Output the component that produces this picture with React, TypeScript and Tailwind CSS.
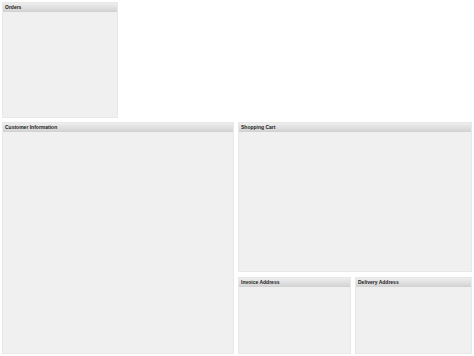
const Panel = ({ title, className }: { title: string; className: string }) => (
  <div className={`flex flex-col bg-[#f0f0f0] border border-[#e8e8e8] ${className}`}>
    <div className="h-[9px] shrink-0 flex items-center px-[2px] bg-gradient-to-b from-[#eeeeee] to-[#d5d5d5] border-b border-[#d2d2d2]">
      <span className="text-[5px] leading-none font-bold text-[#222]">{title}</span>
    </div>
    <div className="flex-1" />
  </div>
);

export default function App() {
  return (
    <div className="w-[474px] h-[356px] bg-white p-[2px] flex flex-col gap-[4px] font-['Liberation_Sans',Arial,sans-serif]">
      <div className="flex">
        <Panel title="Orders" className="w-[116px] h-[116px]" />
      </div>
      <div className="flex-1 flex gap-[4px]">
        <Panel title="Customer Information" className="w-[232px]" />
        <div className="flex-1 flex flex-col gap-[5px]">
          <Panel title="Shopping Cart" className="h-[150px]" />
          <div className="flex-1 flex gap-[4px]">
            <Panel title="Invoice Address" className="w-[113px]" />
            <Panel title="Delivery Address" className="flex-1" />
          </div>
        </div>
      </div>
    </div>
  );
}
